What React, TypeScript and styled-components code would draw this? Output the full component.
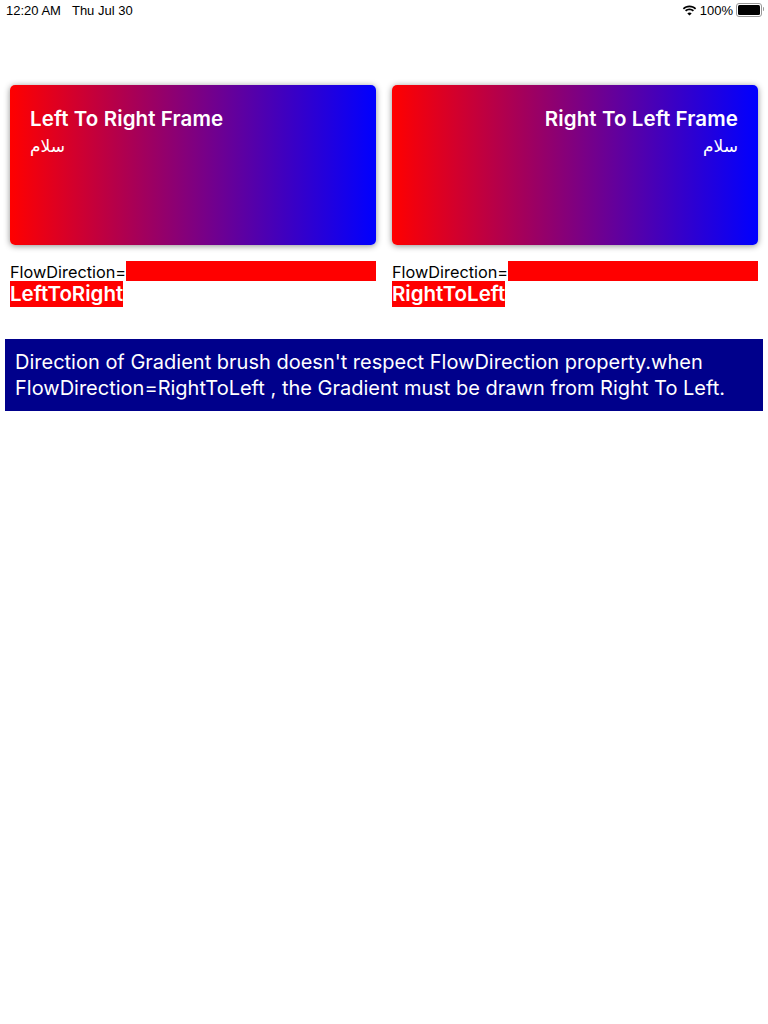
import styled, { createGlobalStyle } from 'styled-components'

const GlobalStyle = createGlobalStyle`
  html, body {
    margin: 0;
    padding: 0;
    background: #ffffff;
  }
  body {
    font-family: Inter, "Noto Sans", sans-serif;
    color: #000000;
  }
`

const Page = styled.div`
  width: 768px;
  min-height: 1024px;
  display: flex;
  flex-direction: column;
`

const StatusBar = styled.div`
  height: 20px;
  padding: 0 6px;
  display: flex;
  align-items: center;
  justify-content: space-between;
  font-family: "Liberation Sans", Arial, sans-serif;
  font-size: 13px;
  color: #000;
`

const StatusLeft = styled.div`
  display: flex;
  gap: 11px;
`

const StatusRight = styled.div`
  display: flex;
  align-items: center;
  gap: 3px;
`

const Battery = styled.div`
  width: 22px;
  height: 10px;
  border: 1px solid #999;
  border-radius: 3px;
  padding: 1px;
  position: relative;
  &::before {
    content: '';
    display: block;
    width: 100%;
    height: 100%;
    background: #000;
    border-radius: 1.5px;
  }
  &::after {
    content: '';
    position: absolute;
    right: -3px;
    top: 3px;
    width: 1.5px;
    height: 4px;
    background: #999;
    border-radius: 0 1px 1px 0;
  }
`

const Frames = styled.div`
  margin-top: 65px;
  padding: 0 10px;
  display: grid;
  grid-template-columns: 1fr 1fr;
  column-gap: 16px;
`

const Column = styled.div`
  display: flex;
  flex-direction: column;
`

const Card = styled.div<{ rtl?: boolean }>`
  height: 160px;
  box-sizing: border-box;
  border-radius: 5px;
  padding: 20px 20px;
  background: linear-gradient(90deg, #ff0000 0%, #0000ff 100%);
  box-shadow: 0 1px 6px rgba(0, 0, 0, 0.45);
  display: flex;
  flex-direction: column;
  align-items: ${({ rtl }) => (rtl ? 'flex-end' : 'flex-start')};
  color: #ffffff;
`

const CardTitle = styled.div`
  font-size: 20.5px;
  font-weight: 600;
  line-height: 28px;
  letter-spacing: 0.1px;
`

const CardSubtitle = styled.div`
  font-family: "Noto Sans", "DejaVu Sans", sans-serif;
  font-size: 17px;
  font-weight: 500;
  line-height: 26px;
`

const LabelLine = styled.div`
  margin-top: 16px;
  display: flex;
  align-items: stretch;
  height: 20px;
`

const LabelText = styled.span`
  font-size: 16.3px;
  line-height: 20px;
  padding-top: 1px;
`

const RedFill = styled.span`
  flex: 1;
  background: #ff0000;
`

const DirectionValue = styled.span`
  align-self: flex-start;
  background: #ff0000;
  color: #ffffff;
  font-size: 20.5px;
  font-weight: 600;
  line-height: 26px;
`

const Banner = styled.div`
  margin: 32px 5px 0;
  padding: 10px 10px;
  background: #00008b;
  color: #ffffff;
  font-family: Inter, "Noto Sans", sans-serif;
  font-size: 20px;
  line-height: 26px;
`

const WifiIcon = () => (
  <svg width="15" height="11" viewBox="0 0 15 11">
    <path d="M7.5 2.2c2.1 0 4 .8 5.5 2.2l1.2-1.2C12.4 1.4 10.1.4 7.5.4S2.6 1.4.8 3.2L2 4.4c1.5-1.4 3.4-2.2 5.5-2.2z" fill="#000" />
    <path d="M7.5 5.2c1.3 0 2.4.5 3.3 1.3L12 5.3c-1.2-1.1-2.8-1.8-4.5-1.8S4.2 4.2 3 5.3l1.2 1.2c.9-.8 2-1.3 3.3-1.3z" fill="#000" />
    <path d="M7.5 10.6 9.7 8.4c-.6-.5-1.4-.9-2.2-.9s-1.6.4-2.2.9z" fill="#000" />
  </svg>
)

const FrameBlock = ({ title, value, rtl }: { title: string; value: string; rtl?: boolean }) => (
  <Column>
    <Card rtl={rtl}>
      <CardTitle>{title}</CardTitle>
      <CardSubtitle dir="rtl">سلام</CardSubtitle>
    </Card>
    <LabelLine>
      <LabelText>FlowDirection=</LabelText>
      <RedFill />
    </LabelLine>
    <DirectionValue>{value}</DirectionValue>
  </Column>
)

const App = () => (
  <Page>
    <GlobalStyle />
    <StatusBar>
      <StatusLeft>
        <span>12:20 AM</span>
        <span>Thu Jul 30</span>
      </StatusLeft>
      <StatusRight>
        <WifiIcon />
        <span>100%</span>
        <Battery />
      </StatusRight>
    </StatusBar>
    <Frames>
      <FrameBlock title="Left To Right Frame" value="LeftToRight" />
      <FrameBlock title="Right To Left Frame" value="RightToLeft" rtl />
    </Frames>
    <Banner>
      Direction of Gradient brush doesn't respect FlowDirection property.when FlowDirection=RightToLeft , the
      Gradient must be drawn from Right To Left.
    </Banner>
  </Page>
)

export default App
